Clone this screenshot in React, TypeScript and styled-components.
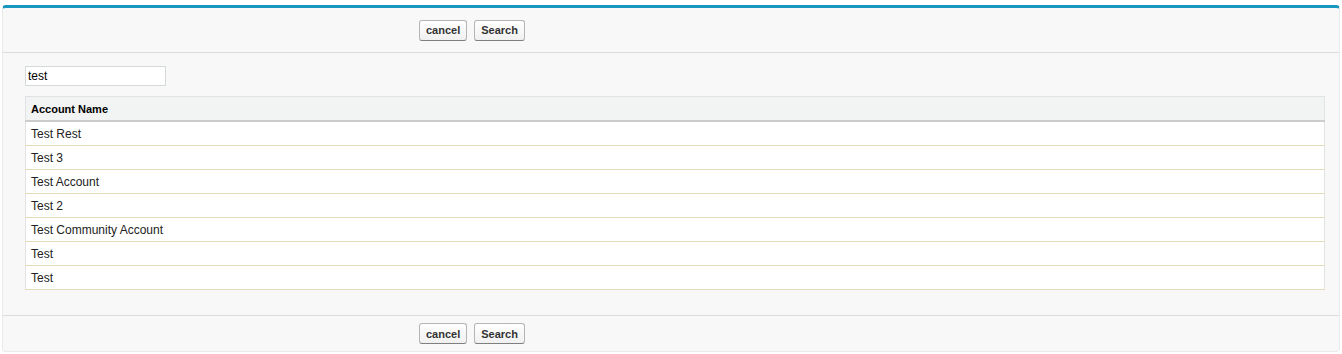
import React from 'react';
import styled, { createGlobalStyle } from 'styled-components';

const GlobalStyle = createGlobalStyle`
  body {
    margin: 0;
    font-family: "Liberation Sans", Arial, sans-serif;
    font-size: 12px;
    color: #222;
    background: #fff;
  }
`;

const Page = styled.div`
  padding: 5px 2px 0 2px;
`;

const PageBlock = styled.div`
  background: #f8f8f8;
  border: 1px solid #eaeaea;
  border-top: 3px solid #1797c0;
  border-radius: 4px;
`;

const ButtonBar = styled.div<{ $top?: boolean }>`
  display: flex;
  align-items: center;
  gap: 7px;
  padding-left: 416px;
  height: ${(p) => (p.$top ? '44px' : '35px')};
  ${(p) =>
    p.$top
      ? 'border-bottom: 1px solid #dbdbdb;'
      : 'border-top: 1px solid #dbdbdb;'}
`;

const Btn = styled.button`
  font-family: "Liberation Sans", Arial, sans-serif;
  font-size: 11px;
  font-weight: bold;
  color: #333;
  height: 21px;
  padding: 0 6px;
  border: 1px solid #b5b5b5;
  border-bottom-color: #7f7f7f;
  border-radius: 3px;
  background: linear-gradient(#ffffff, #f0f0f0);
  cursor: pointer;
`;

const Body = styled.div`
  padding: 13px 14px 25px 22px;
  display: flex;
  flex-direction: column;
  gap: 10px;
`;

const SearchInput = styled.input`
  width: 141px;
  height: 20px;
  box-sizing: border-box;
  border: 1px solid #d4dadc;
  padding: 0 2px;
  font-family: "Liberation Sans", Arial, sans-serif;
  font-size: 12px;
  color: #000;
  background: #fff;
`;

const List = styled.table`
  width: 100%;
  border-collapse: collapse;
  background: #fff;
  border: 1px solid #e0e3e5;
`;

const HeadCell = styled.th`
  text-align: left;
  background: #f2f3f3;
  font-size: 11px;
  font-weight: bold;
  color: #000;
  height: 23px;
  padding: 0 5px;
  border-bottom: 2px solid #cccccc;
`;

const Cell = styled.td`
  height: 23px;
  padding: 0 5px;
  font-size: 12px;
  color: #222;
  border-bottom: 1px solid #e3deb8;
`;

const accounts = [
  'Test Rest',
  'Test 3',
  'Test Account',
  'Test 2',
  'Test Community Account',
  'Test',
  'Test',
];

const Buttons = ({ top }: { top?: boolean }) => (
  <ButtonBar $top={top}>
    <Btn>cancel</Btn>
    <Btn>Search</Btn>
  </ButtonBar>
);

export default function App() {
  return (
    <Page>
      <GlobalStyle />
      <PageBlock>
        <Buttons top />
        <Body>
          <SearchInput defaultValue="test" />
          <List>
            <thead>
              <tr>
                <HeadCell>Account Name</HeadCell>
              </tr>
            </thead>
            <tbody>
              {accounts.map((name, i) => (
                <tr key={i}>
                  <Cell>{name}</Cell>
                </tr>
              ))}
            </tbody>
          </List>
        </Body>
        <Buttons />
      </PageBlock>
    </Page>
  );
}
